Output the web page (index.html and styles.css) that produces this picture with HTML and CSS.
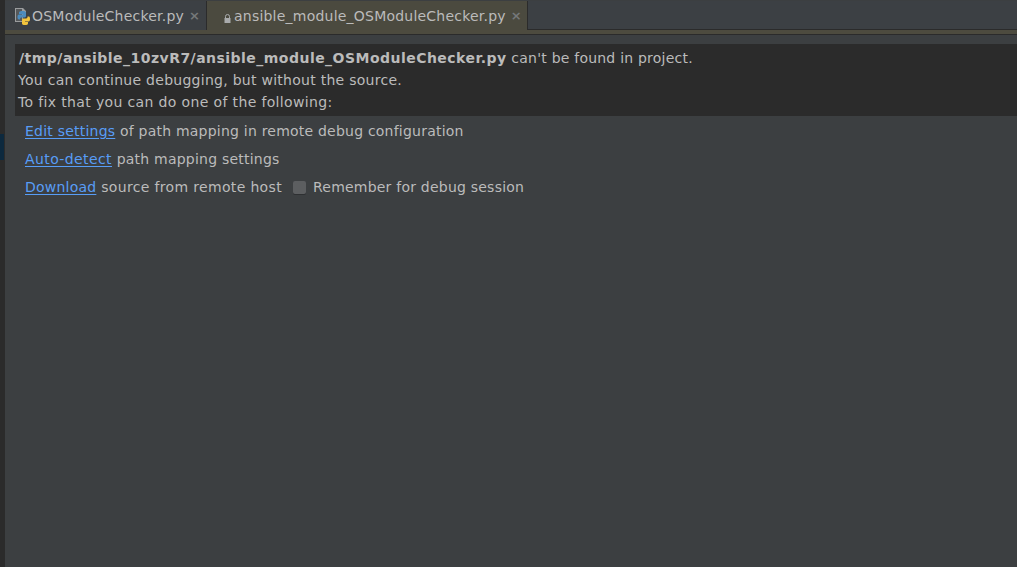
FILE: index.html
```html
<!DOCTYPE html>
<html lang="en">
<head>
<meta charset="utf-8">
<title>Debugger source not found</title>
<link rel="stylesheet" href="styles.css">
</head>
<body>
<div class="gutter"><div class="gutter-mark"></div></div>
<div class="main">
  <div class="tabbar">
    <div class="tab tab-inactive">
      <svg class="py-icon" width="16" height="18" viewBox="0 0 16 18">
        <path d="M1 1h8l3 3v3H9v8H1z" fill="#9a9c9e"/>
        <path d="M2 2h6v3h3v2H8v7H2z" fill="#55585a"/>
        <path d="M5 5.500C5 4.500 6.300 4 8.500 4S12 4.500 12 5.500V9c0 .9-.7 1.500-1.500 1.500H7.500C6.700 10.500 6 11.200 6 12v.5H5C3.900 12.500 3.500 11.500 3.500 10S3.900 7.500 5 7.500h4V7H5z" fill="#4b8bbe"/>
        <path d="M15 9.500c.7.3 1 1.200 1 2.500s-.3 2.500-1.500 2.500H11v.5h3v1.500c0 1-1.300 1.500-3 1.500s-3-.5-3-1.500V13c0-.8.600-1.500 1.500-1.500h2.700c.8 0 1.300-.6 1.300-1.400v-.6z" fill="#f2c43d"/>
      </svg>
      <span class="tab-label">OSModuleChecker.py</span>
      <span class="tab-close">×</span>
    </div>
    <div class="tab tab-active">
      <svg class="lock-icon" width="7" height="9" viewBox="0 0 7 9">
        <path d="M1.500 4V2.500a2 2 0 0 1 4 0V4" fill="none" stroke="#a9abac" stroke-width="1"/>
        <rect x="0.500" y="4" width="6" height="5" fill="#a9abac"/>
      </svg>
      <span class="tab-label">ansible_module_OSModuleChecker.py</span>
      <span class="tab-close">×</span>
    </div>
    <div class="tab-rest"></div>
  </div>
  <div class="stripe"></div>
  <div class="content">
    <div class="notice">
      <p class="notice-line"><strong class="path">/tmp/ansible_10zvR7/ansible_module_OSModuleChecker.py</strong> can't be found in project.</p>
      <p class="notice-line notice-line-second">You can continue debugging, but without the source.</p>
      <p class="notice-line notice-line-third">To fix that you can do one of the following:</p>
    </div>
    <div class="actions">
      <p class="action action-first"><a class="link" href="#">Edit settings</a> of path mapping in remote debug configuration</p>
      <p class="action"><a class="link link-wide" href="#">Auto-detect</a> path mapping settings</p>
      <div class="action action-last">
        <span class="source-text"><a class="link" href="#">Download</a> source from remote host</span>
        <label class="remember"><span class="checkbox"></span>Remember for debug session</label>
      </div>
    </div>
  </div>
</div>
</body>
</html>
```

FILE: styles.css
```css
html, body {
  margin: 0;
  padding: 0;
  height: 100%;
  overflow: hidden;
}

body {
  display: flex;
  background: #3c3f41;
  color: #bbbbbb;
  font-family: "DejaVu Sans", sans-serif;
  font-size: 14px;
  letter-spacing: 0.22px;
}

.gutter {
  width: 5px;
  flex: none;
  background: #2b2b2b;
  padding-top: 134px;
  box-sizing: border-box;
}

.gutter-mark {
  width: 4px;
  height: 26px;
  background: #0d293e;
}

.main {
  flex: 1;
  display: flex;
  flex-direction: column;
  min-width: 0;
}

.tabbar {
  display: flex;
  height: 29px;
  box-sizing: border-box;
  margin-top: 1px;
  background: #3c4044;
}

.tab {
  display: flex;
  align-items: center;
  box-sizing: border-box;
  height: 29px;
  color: #bbbbbb;
}

.tab-inactive {
  width: 202px;
  padding-left: 9px;
  background: #3c4044;
  border-right: 1px solid #2b2b2b;
}

.tab-active {
  width: 321px;
  padding-left: 17px;
  background: #4b4a3f;
  border-right: 1px solid #2b2b2b;
}

.tab-rest {
  flex: 1;
  border-bottom: 1px solid #2b2b2b;
}

.py-icon {
  flex: none;
  margin-right: 2px;
}

.lock-icon {
  flex: none;
  margin: 6px 3px 0 0;
}

.tab-close {
  margin-left: 5px;
  color: #75787a;
  font-size: 13px;
  font-weight: bold;
}

.stripe {
  height: 5px;
  box-sizing: border-box;
  background: #4d4b3f;
  border-bottom: 1px solid #2b2b2b;
}

.content {
  flex: 1;
  padding: 9px 0 0 10px;
}

.notice {
  background: #2b2b2b;
  height: 72px;
  padding: 3px 0 0 3px;
  box-sizing: border-box;
}

.notice-line {
  margin: 0;
  height: 22px;
  line-height: 22px;
}

.notice-line-second {
  letter-spacing: 0.27px;
}

.notice-line-third {
  letter-spacing: 0.36px;
}

.path {
  font-weight: bold;
  letter-spacing: 0.47px;
  margin-left: 1px;
}

.actions {
  padding-left: 10px;
}

.action {
  margin: 0;
  height: 28px;
  line-height: 28px;
}

.action-first {
  height: 29px;
  line-height: 31px;
}

.action-last {
  display: flex;
  align-items: center;
  gap: 11px;
}

.source-text {
  letter-spacing: 0.34px;
}

.link {
  color: #589df6;
  letter-spacing: 0.22px;
  text-underline-offset: 2px;
}

.link-wide {
  letter-spacing: 0.4px;
}

.remember {
  display: flex;
  align-items: center;
  gap: 7px;
}

.checkbox {
  width: 13px;
  height: 13px;
  background: #5c5e60;
  border-radius: 2px;
  box-shadow: 0 1px 0 #2e3032;
}
```
